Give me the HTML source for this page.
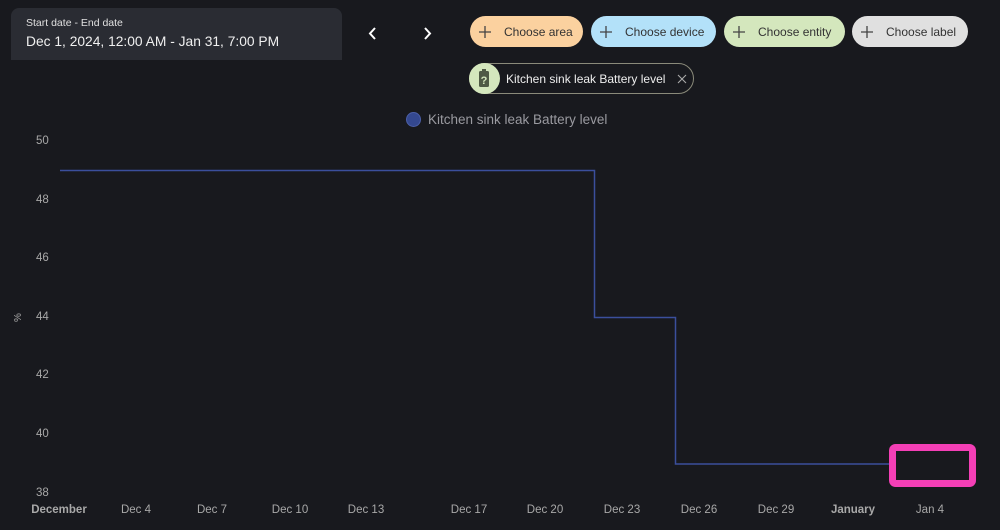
<!DOCTYPE html>
<html><head><style>
body{margin:0;width:1000px;height:530px;background:#18191e;font-family:"Liberation Sans",sans-serif;position:relative;overflow:hidden;color:#e3e3e3}
.date{position:absolute;left:11px;top:8px;width:331px;height:52px;background:#2a2c33;border-radius:8px 8px 0 0}
.date .l{position:absolute;left:15px;top:9px;font-size:10.5px;color:#e0e0e0}
.date .v{position:absolute;left:15px;top:26px;font-size:13.8px;color:#f0f0f0}
.chip{position:absolute;top:16px;height:31px;border-radius:16px;font-size:12px;color:#333;box-sizing:border-box;line-height:33px;padding-left:34px}
.chip svg{position:absolute;left:8px;top:9px}
.ent{position:absolute;left:469px;top:63px;width:225px;height:31px;border:1px solid #8a8a7a;border-radius:16px;box-sizing:border-box}
.ent .ic{position:absolute;left:-1px;top:-1px;width:31px;height:31px;border-radius:50%;background:#d4e7bd}
.ent .t{position:absolute;left:36px;top:8px;font-size:12px;color:#eee}
.yl{position:absolute;left:36px;font-size:11.5px;color:#a8a8a8}
.xl{position:absolute;top:504px;font-size:11.5px;color:#a8a8a8;transform:translateX(-50%)}
</style></head><body>
<div class="date"><div class="l">Start date - End date</div><div class="v">Dec 1, 2024, 12:00 AM - Jan 31, 7:00 PM</div></div>
<svg width="1000" height="60" style="position:absolute;left:0;top:0"><path d="M375 28L370 33.5L375 39" fill="none" stroke="#fff" stroke-width="2"/><path d="M425 28L430 33.5L425 39" fill="none" stroke="#fff" stroke-width="2"/></svg>
<div class="chip" style="left:470px;width:113px;background:#fbd19f"><svg width="14" height="14"><path d="M7 1V13M1 7H13" stroke="#444" stroke-width="1.3"/></svg>Choose area</div>
<div class="chip" style="left:591px;width:125px;background:#b3e1f9"><svg width="14" height="14"><path d="M7 1V13M1 7H13" stroke="#444" stroke-width="1.3"/></svg>Choose device</div>
<div class="chip" style="left:724px;width:121px;background:#d4e7bd"><svg width="14" height="14"><path d="M7 1V13M1 7H13" stroke="#444" stroke-width="1.3"/></svg>Choose entity</div>
<div class="chip" style="left:852px;width:116px;background:#e0e0e0"><svg width="14" height="14"><path d="M7 1V13M1 7H13" stroke="#444" stroke-width="1.3"/></svg>Choose label</div>
<div class="ent"><div class="ic"><svg width="31" height="31"><rect x="10" y="8" width="10" height="16" rx="1.5" fill="#4f5a45"/><rect x="13" y="6" width="4" height="3" fill="#4f5a45"/><text x="15" y="21" font-size="11" font-weight="bold" fill="#d4e7bd" text-anchor="middle" font-family="Liberation Sans">?</text></svg></div><div class="t">Kitchen sink leak Battery level</div><svg width="10" height="10" style="position:absolute;left:207px;top:10px"><path d="M1 1L9 9M9 1L1 9" stroke="#aaa" stroke-width="1.1"/></svg></div>
<div style="position:absolute;left:406px;top:112px;width:15px;height:15px;border-radius:50%;background:#34488f;border:1px solid #4b5fa8;box-sizing:border-box"></div>
<div style="position:absolute;left:428px;top:112px;font-size:13.5px;color:#9a9aa0">Kitchen sink leak Battery level</div>
<div class="yl" style="top:135px">50</div><div class="yl" style="top:194px">48</div><div class="yl" style="top:252px">46</div><div class="yl" style="top:311px">44</div><div class="yl" style="top:369px">42</div><div class="yl" style="top:428px">40</div><div class="yl" style="top:487px">38</div>
<div style="position:absolute;left:14px;top:312px;font-size:10px;color:#a8a8a8;transform:rotate(-90deg)">%</div>
<svg width="1000" height="530" style="position:absolute;left:0;top:0"><path d="M60 170.5H594.5V317.5H675.5V464H890" fill="none" stroke="#3b4f9c" stroke-width="1.5"/><rect x="892.5" y="447.5" width="80" height="36" rx="3" fill="none" stroke="#f43fb6" stroke-width="7"/></svg>
<div class="xl" style="left:59px;font-weight:bold">December</div>
<div class="xl" style="left:136px">Dec 4</div><div class="xl" style="left:212px">Dec 7</div><div class="xl" style="left:290px">Dec 10</div><div class="xl" style="left:366px">Dec 13</div><div class="xl" style="left:469px">Dec 17</div><div class="xl" style="left:545px">Dec 20</div><div class="xl" style="left:622px">Dec 23</div><div class="xl" style="left:699px">Dec 26</div><div class="xl" style="left:776px">Dec 29</div><div class="xl" style="left:853px;font-weight:bold">January</div><div class="xl" style="left:930px">Jan 4</div>
</body></html>
